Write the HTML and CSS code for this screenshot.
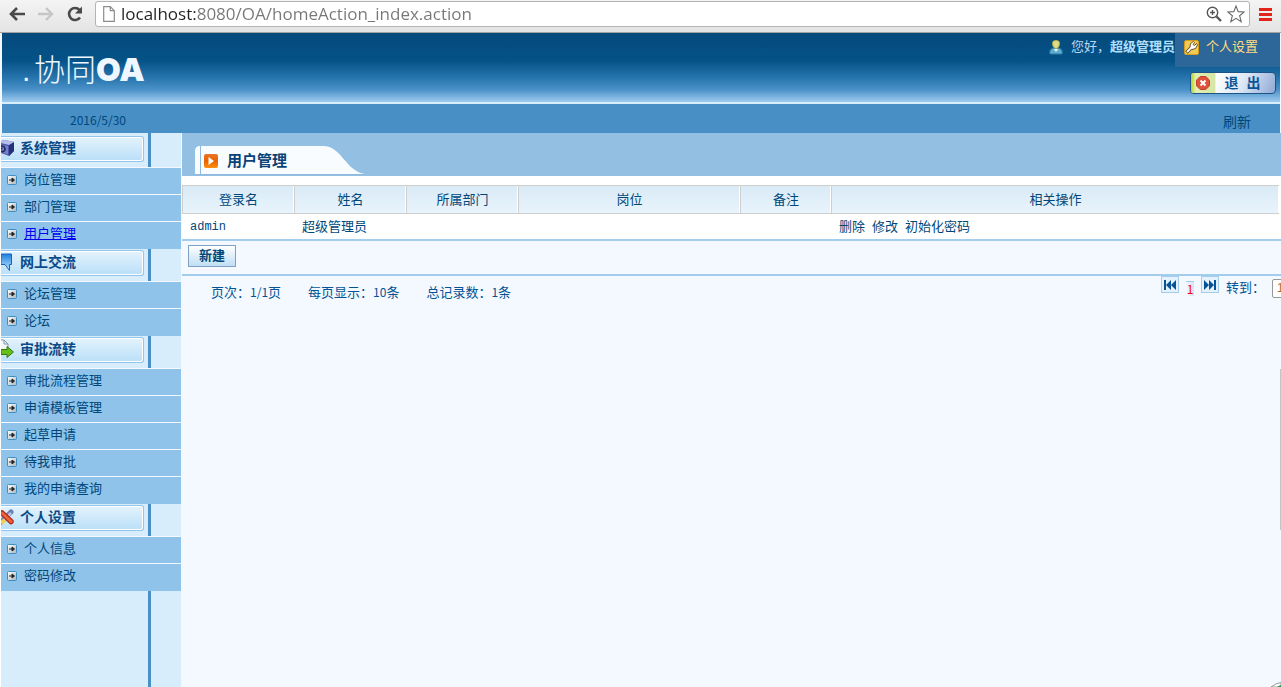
FILE: index.html
```html
<!DOCTYPE html>
<html lang="zh-CN">
<head>
  <meta charset="UTF-8" />
  <meta name="viewport" content="width=device-width, initial-scale=1" />
  <title>协同OA</title>
  <link rel="stylesheet" href="styles.css">
</head>
<body>
  <svg width="0" height="0" class="defs">
    <defs>
      <linearGradient id="steel" x1="0" y1="0" x2="1" y2="1">
        <stop offset="0" stop-color="#ffffff" />
        <stop offset="1" stop-color="#aab6bd" />
      </linearGradient>
      <linearGradient id="orange" x1="0" y1="0" x2="0" y2="1">
        <stop offset="0" stop-color="#e8752a" />
        <stop offset="0.5" stop-color="#e86100" />
        <stop offset="1" stop-color="#ff8f10" />
      </linearGradient>
      <linearGradient id="bubble" x1="0" y1="0" x2="0" y2="1">
        <stop offset="0" stop-color="#1a7fe0" />
        <stop offset="1" stop-color="#c4e8ff" />
      </linearGradient>
      <symbol id="arrow" viewBox="0 0 10 10">
        <rect x="0.5" y="0.5" width="9" height="9" rx="1" fill="url(#steel)" stroke="#3c8fc0" />
        <path d="M2 5h4M5 3L7.500 5L5 7z" fill="#222" stroke="#222" />
      </symbol>
    </defs>
  </svg>

  <div class="toolbar">
    <button type="button" class="tool-btn" aria-label="后退">
      <svg width="18" height="16" viewBox="0 0 18 16"><path d="M9 2L3 8l6 6M3 8h14" fill="none" stroke="#4a4a4a" stroke-width="2.6" /></svg>
    </button>
    <button type="button" class="tool-btn" aria-label="前进">
      <svg width="18" height="16" viewBox="0 0 18 16"><path d="M9 2l6 6l-6 6M15 8H1" fill="none" stroke="#c6c6c6" stroke-width="2.4" /></svg>
    </button>
    <button type="button" class="tool-btn" aria-label="重新加载">
      <svg width="18" height="16" viewBox="0 0 18 16"><path d="M14 11.5A6 6 0 1 1 13.5 4" fill="none" stroke="#4a4a4a" stroke-width="2.6" /><path d="M16 0.5v7H9z" fill="#4a4a4a" /></svg>
    </button>
    <div class="address">
      <svg width="12" height="16" viewBox="0 0 12 16"><path d="M0.7 0.7h6.6l4 4v10.6H0.7zM7.3 0.7v4h4" fill="#fff" stroke="#8c8c8c" stroke-width="1.2" /></svg>
      <input type="text" class="url" aria-label="地址" value="localhost:8080/OA/homeAction_index.action" />
      <button type="button" class="addr-btn" aria-label="缩放">
        <svg width="16" height="16" viewBox="0 0 16 16"><circle cx="6.5" cy="6.5" r="5.2" fill="none" stroke="#555" stroke-width="1.4" /><path d="M4 6.5h5M6.5 4v5" stroke="#555" stroke-width="1.4" /><path d="M10.5 10.5l4.5 4.5" stroke="#555" stroke-width="2.4" /></svg>
      </button>
      <button type="button" class="addr-btn" aria-label="收藏">
        <svg width="18" height="18" viewBox="0 0 18 18"><path d="M9 1l2.2 5.6l6.1 0.3l-4.7 3.8l1.6 6L9 13.4l-5.2 3.3l1.6-6L0.7 6.9l6.1-0.3z" fill="#fff" stroke="#6a6a6a" stroke-width="1.1" /></svg>
      </button>
    </div>
    <button type="button" class="menu-btn" aria-label="菜单">
      <svg width="13" height="13" viewBox="0 0 13 13"><path d="M0 1.5h13M0 6.5h13M0 11.5h13" stroke="#e3241b" stroke-width="3" /></svg>
    </button>
  </div>

  <div class="header">
    <div class="logo"><span class="dot">.</span><span class="cn">协同</span><span class="oa">OA</span></div>
    <div class="user-area">
      <div class="user-line">
        <span class="hello">
          <svg width="14" height="15" viewBox="0 0 14 15">
            <path d="M1 14c-1-5 2-6 6-6s7 1 6 6z" fill="#5cadcf" stroke="#2f7da8" />
            <path d="M4.5 9L7 12l2.5-3" fill="#d5eef8" />
            <path d="M3.5 3.5C3.5 1 5 0.5 7 0.5s3.5 0.5 3.5 3S9 8.5 7 8.5S3.5 6 3.5 3.5z" fill="#dfdc86" stroke="#a9a84a" />
          </svg>
          您好，<b>超级管理员</b>
        </span>
        <a href="#" class="setting">
          <svg width="15" height="15" viewBox="0 0 15 15">
            <rect x="0.5" y="0.5" width="14" height="14" rx="1.5" fill="#f3c956" stroke="#d39a1c" />
            <path d="M2.5 12.500L8 7" stroke="#5c4a22" stroke-width="3.6" />
            <path d="M9.500 1.500L6.500 3.500L6 7.500L8 9.500L11.500 8.500L13.500 5L12.500 3.500L10.500 5.500L9 4.500L10.500 2.500z" fill="#fff" stroke="#5c4a22" stroke-width="0.9" />
            <path d="M3 12L8.500 6.500" stroke="#fff" stroke-width="1.8" />
          </svg>
          个人设置
        </a>
      </div>
      <button type="button" class="logout">
        <span class="logout-icon">
          <svg width="14" height="14" viewBox="0 0 14 14"><path d="M4.2 0.5h5.6l3.7 3.7v5.6l-3.7 3.7H4.2L0.5 9.8V4.200z" fill="#e0513a" stroke="#c0402a" /><path d="M4.500 4.500l5 5M9.500 4.500l-5 5" stroke="#fff" stroke-width="2" /></svg>
        </span>
        <span class="logout-text">退&nbsp; 出</span>
      </button>
    </div>
  </div>

  <div class="subbar">
    <span class="date">2016/5/30</span>
    <a href="#">刷新</a>
  </div>

  <div class="page">
    <div class="sidebar">
      <div class="group">
        <button type="button" class="group-title">
          <svg width="14" height="20" viewBox="0 0 14 20"><path d="M0 3l4-1l9 2v9l-5 5l-8-3z" fill="#4a57a6" /><path d="M8 7l5-3v9l-5 5z" fill="#27307a" /><path d="M0 3l4-1l9 2l-5 3l-8-2z" fill="#b4bdec" /><path d="M0 6.500l7 1.500v8.500l-7-2z" fill="#7480c8" /><path d="M0 8c3 0 4 1 4 3s-1 3-4 2.500M0 10.500h1.500" fill="none" stroke="#1f2867" stroke-width="1.6" /></svg>
          系统管理
        </button>
      </div>
      <ul>
        <li><a href="#"><svg width="10" height="10"><use href="#arrow" /></svg>岗位管理</a></li>
        <li><a href="#"><svg width="10" height="10"><use href="#arrow" /></svg>部门管理</a></li>
        <li><a href="#" class="active"><svg width="10" height="10"><use href="#arrow" /></svg><span>用户管理</span></a></li>
      </ul>
      <div class="group">
        <button type="button" class="group-title">
          <svg width="14" height="20" viewBox="0 0 14 20"><path d="M0 2h10.500v10.500H8.500v6L4 12.500H0z" fill="url(#bubble)" stroke="#1c64b8" /></svg>
          网上交流
        </button>
      </div>
      <ul>
        <li><a href="#"><svg width="10" height="10"><use href="#arrow" /></svg>论坛管理</a></li>
        <li><a href="#"><svg width="10" height="10"><use href="#arrow" /></svg>论坛</a></li>
      </ul>
      <div class="group">
        <button type="button" class="group-title">
          <svg width="14" height="20" viewBox="0 0 14 20"><path d="M0 1h3l4 4v9H0M3 1v4h4" fill="#f4f7fa" stroke="#8b98a5" /><path d="M0 10.500h6V7.500l6.500 5.500L6 18.500V15.500H0z" fill="#67bd1c" stroke="#2e7d0b" /></svg>
          审批流转
        </button>
      </div>
      <ul>
        <li><a href="#"><svg width="10" height="10"><use href="#arrow" /></svg>审批流程管理</a></li>
        <li><a href="#"><svg width="10" height="10"><use href="#arrow" /></svg>申请模板管理</a></li>
        <li><a href="#"><svg width="10" height="10"><use href="#arrow" /></svg>起草申请</a></li>
        <li><a href="#"><svg width="10" height="10"><use href="#arrow" /></svg>待我审批</a></li>
        <li><a href="#"><svg width="10" height="10"><use href="#arrow" /></svg>我的申请查询</a></li>
      </ul>
      <div class="group">
        <button type="button" class="group-title">
          <svg width="14" height="20" viewBox="0 0 14 20"><path d="M0 15L10 5" stroke="#6c7fb4" stroke-width="5" stroke-linecap="round" /><path d="M1 15L10 6" stroke="#b9c6ea" stroke-width="2.5" /><path d="M1 6L10 14.500" stroke="#a83018" stroke-width="5.500" stroke-linecap="round" /><path d="M1 6L10 14.500" stroke="#f0603a" stroke-width="3" stroke-linecap="round" /><path d="M0 16l4-3" stroke="#f3d04e" stroke-width="4" /></svg>
          个人设置
        </button>
      </div>
      <ul>
        <li><a href="#"><svg width="10" height="10"><use href="#arrow" /></svg>个人信息</a></li>
        <li><a href="#"><svg width="10" height="10"><use href="#arrow" /></svg>密码修改</a></li>
      </ul>
    </div>

    <div class="main">
      <div class="title-bar">
        <div class="tab">
          <svg class="tab-bg" width="170" height="30" viewBox="0 0 170 30"><path d="M0 29V5Q0 0 5 0H128C147 0 150 25 170 28V29z" fill="#f9fcff" /><path d="M5.5 0v29M0 28.5h170" stroke="#8fbbe2" /></svg>
          <svg width="14" height="14" viewBox="0 0 14 14"><rect width="14" height="14" rx="2" fill="url(#orange)" /><path d="M4.5 3l5.500 4l-5.500 4z" fill="#fff" /></svg>
          <span>用户管理</span>
        </div>
      </div>

      <div class="list-wrap">
        <table class="list">
          <colgroup>
            <col class="c-name" /><col class="c-name" /><col class="c-name" /><col class="c-post" /><col class="c-note" /><col />
          </colgroup>
          <thead>
            <tr><th>登录名</th><th>姓名</th><th>所属部门</th><th>岗位</th><th>备注</th><th>相关操作</th></tr>
          </thead>
          <tbody>
            <tr>
              <td><span class="login-name">admin</span></td>
              <td>超级管理员</td>
              <td></td>
              <td></td>
              <td></td>
              <td><div class="actions"><a href="#">删除</a><a href="#">修改</a><a href="#">初始化密码</a></div></td>
            </tr>
          </tbody>
        </table>
      </div>

      <div class="create-row">
        <button type="button" class="create-btn">新建</button>
      </div>

      <div class="pager">
        <div class="page-info">
          <span>页次：<span class="num">1/1</span>页</span>
          <span>每页显示：<span class="num">10</span>条</span>
          <span>总记录数：<span class="num">1</span>条</span>
        </div>
        <div class="page-nav">
          <button type="button" class="nav-btn" aria-label="首页"><svg width="12" height="10" viewBox="0 0 12 10"><path d="M0 0h2v10H0zM7 0v10L2 5zM12 0v10L7 5z" fill="#045397" /></svg></button>
          <span class="current num">1</span>
          <button type="button" class="nav-btn" aria-label="尾页"><svg width="12" height="10" viewBox="0 0 12 10"><path d="M10 0h2v10h-2zM5 0v10l5-5zM0 0v10l5-5z" fill="#045397" /></svg></button>
          <label for="goto">转到：</label>
          <select id="goto"><option>1</option></select>
        </div>
      </div>
    </div>
  </div>

  <div class="scroll-thumb"></div>
  <svg class="float-ball" width="10" height="5" viewBox="0 0 10 5"><path d="M0 5Q5 1 10 0.5V5z" fill="#fff" stroke="#999" /><path d="M6 5Q8 3.500 10 3V5z" fill="#1c9a5b" /></svg>
</body>
</html>
```

FILE: styles.css
```css
* {
  box-sizing: border-box;
}

body {
  margin: 0;
  min-height: 100vh;
  display: flex;
  flex-direction: column;
  position: relative;
  overflow-x: hidden;
  font-family: "Liberation Sans", "Noto Sans CJK SC", sans-serif;
  font-size: 13px;
  line-height: 18px;
  color: #004779;
  background: #f3f9fe;
}

button {
  font-family: inherit;
  color: inherit;
  cursor: pointer;
}

a {
  color: inherit;
  text-decoration: none;
}

svg {
  display: block;
  flex: none;
}

.defs {
  position: absolute;
}

.num {
  font-family: "Noto Sans CJK SC", sans-serif;
  font-size: 12px;
}

.login-name {
  font-family: "Liberation Mono", monospace;
  font-size: 12px;
}

/* browser toolbar */
.toolbar {
  display: flex;
  align-items: center;
  height: 33px;
  padding: 0 9px 4px 8px;
  background: linear-gradient(#f4f4f4, #e4e4e4);
  border-bottom: 1px solid #a3a3a3;
}

.tool-btn,
.addr-btn,
.menu-btn {
  border: none;
  background: none;
  padding: 0;
}

.tool-btn {
  width: 29px;
}

.address {
  flex: 1;
  display: flex;
  align-items: center;
  height: 26px;
  padding: 0 4px 0 7px;
  background: #fff;
  border: 1px solid #b4b4b4;
  border-radius: 3px;
}

.url {
  flex: 1;
  min-width: 0;
  margin-left: 6px;
  padding: 0;
  border: none;
  outline: none;
  font-family: "Open Sans", sans-serif;
  font-size: 17px;
  line-height: 24px;
  color: transparent;
  background: linear-gradient(90deg, #222 75px, #777 75px);
  -webkit-background-clip: text;
  background-clip: text;
}

.addr-btn {
  margin-left: 5px;
}

.menu-btn {
  margin-left: 9px;
}

/* header */
.header {
  display: flex;
  justify-content: space-between;
  height: 69px;
  margin: 0 1px 0 2px;
  background: linear-gradient(#064a7c, #045287 40%, #2775ad 65%, #4a90c8 82%, #9ecbee);
}

.logo {
  display: flex;
  align-items: baseline;
  padding: 13px 0 0 20px;
  line-height: 44px;
  color: #eef7ff;
}

.logo .dot {
  width: 12px;
  font-size: 30px;
}

.logo .cn {
  font-family: "Noto Sans CJK SC", sans-serif;
  font-size: 31px;
  font-weight: 300;
}

.logo .oa {
  font-family: Inter, sans-serif;
  font-size: 32px;
  font-weight: 900;
}

.user-area {
  display: flex;
  flex-direction: column;
  align-items: flex-end;
  gap: 5px;
}

.user-line {
  display: flex;
  height: 34px;
}

.hello,
.setting {
  display: flex;
  height: 28px;
  align-items: center;
}

.hello {
  color: #b5d8f5;
}

.hello svg {
  margin-right: 8px;
}

.hello b {
  color: #b0e0ff;
}

.setting {
  gap: 7px;
  height: 34px;
  padding: 0 22px 6px 9px;
  background: #2d6699;
  color: #ffdd80;
}

.logout {
  display: flex;
  align-items: stretch;
  width: 86px;
  height: 22px;
  margin-right: 4px;
  padding: 0;
  border: 1px solid #1d5487;
  border-radius: 4px;
  overflow: hidden;
  background: linear-gradient(115deg, #fdfeff 30%, #dfe8f6 60%, #8fa9d6);
}

.logout-icon {
  display: flex;
  align-items: center;
  padding: 0 5px;
  background: linear-gradient(90deg, #b4d41c, #e4efb4 20%, #d5e6a4);
  border-right: 1px solid #eef4dc;
}

.logout-text {
  flex: 1;
  padding-right: 6px;
  font-size: 14px;
  font-weight: 700;
  line-height: 20px;
  color: #0b5596;
}

.subbar {
  display: flex;
  justify-content: space-between;
  height: 31px;
  margin: 0 1px 0 2px;
  padding: 9px 29px 0 68px;
  border-top: 2px solid #d8edfc;
  background: #488fc6;
}

.subbar .date {
  font-family: "Noto Sans CJK SC", sans-serif;
  font-size: 12px;
  line-height: 14px;
}

.subbar a {
  font-size: 14px;
}

/* layout */
.page {
  flex: 1;
  display: flex;
}

/* sidebar, with the blue rule that runs behind the lists */
.sidebar {
  flex: none;
  width: 181px;
  padding-top: 2px;
  border-left: 1px solid #fff;
  background: linear-gradient(90deg, #d7edfb 147px, #488fc6 147px, #488fc6 150px, #d7edfb 150px);
}

.group {
  height: 32px;
  padding-top: 1px;
}

.group-title {
  display: flex;
  align-items: center;
  gap: 5px;
  width: 143px;
  height: 26px;
  padding: 0 0 2px;
  border: 1px solid #93c4ea;
  border-left: none;
  border-radius: 0 3px 3px 0;
  box-shadow: inset -1px -1px #fff, inset 0 1px #fff;
  background: linear-gradient(#e4f3fc, #b9dff8);
  font-size: 14px;
  font-weight: 700;
  line-height: 18px;
  color: #0b4a86;
}

.sidebar ul {
  list-style: none;
  margin: 0;
  padding: 0;
  border-bottom: 1px solid #8fc3ea;
}

.sidebar li {
  height: 27px;
  border-top: 1px solid #f3f9fe;
  background: #8fc3ea;
}

.sidebar li a {
  display: flex;
  align-items: center;
  gap: 7px;
  height: 24px;
  padding-left: 6px;
}

.sidebar .active span {
  color: #0000f0;
  text-decoration: underline;
}

/* content */
.main {
  flex: 1;
  min-width: 0;
  overflow: hidden;
  margin-left: 1px;
}

.title-bar {
  height: 43px;
  padding: 13px 0 0 13px;
  background: #93bfe2;
}

.tab {
  position: relative;
  display: flex;
  align-items: center;
  gap: 9px;
  width: 170px;
  height: 30px;
  padding-left: 9px;
  font-size: 15px;
  font-weight: 700;
  color: #0b4276;
}

.tab-bg {
  position: absolute;
  top: 0;
  left: 0;
}

.tab svg,
.tab span {
  z-index: 1;
}

.tab .tab-bg {
  z-index: 0;
}

.list-wrap {
  padding: 9px 2px 0 0;
  border-bottom: 2px solid #a3cdec;
  background: #fff;
}

.list {
  width: 100%;
  table-layout: fixed;
  border-collapse: separate;
  border-spacing: 0;
}

.c-name {
  width: 112px;
}

.c-post {
  width: 222px;
}

.c-note {
  width: 91px;
}

.list th {
  height: 29px;
  padding: 0;
  border: 1px solid #cfcfcf;
  border-width: 1px 0 1px 1px;
  box-shadow: inset -1px 0 #fff;
  background: linear-gradient(#d9eaf6, #e9f4fc);
  font-weight: 400;
}

.list td {
  height: 25px;
  padding: 0 8px;
}

.actions {
  display: flex;
  gap: 7px;
}

.create-row {
  padding: 4px 6px 7px;
  border-bottom: 2px solid #a3cdec;
}

.create-btn {
  display: block;
  width: 48px;
  height: 22px;
  padding: 0;
  border: 1px solid #7f9fc4;
  background: linear-gradient(#fff, #c0def5);
  font-size: 13px;
  font-weight: 700;
  line-height: 18px;
}

.pager {
  display: flex;
  justify-content: space-between;
  color: #045397;
}

.page-info {
  display: flex;
  gap: 27px;
  padding: 7px 0 0 29px;
}

.page-nav {
  display: flex;
  align-items: center;
  height: 24px;
}

.nav-btn {
  display: flex;
  align-items: center;
  justify-content: center;
  align-self: flex-start;
  width: 18px;
  height: 17px;
  padding: 0;
  border: 1px solid #a3cdec;
  background: #e6f2fb;
}

.current {
  margin: 0 7px;
  width: 8px;
  line-height: 14px;
  text-align: center;
  color: #f00;
  background: linear-gradient(90deg, #f3f9fe, #cfe5f5);
  border-top: 1px solid #a3cdec;
}

.page-nav label {
  margin-left: 7px;
}

/* the drop-down runs past the right edge of the frame */
.page-nav select {
  width: 60px;
  height: 19px;
  margin: 0 -51px 0 7px;
  padding: 0;
  border: 1px solid #999;
  border-radius: 2px;
  background: #fff;
  font-size: 12px;
  color: #b46a1c;
}

.scroll-thumb {
  position: absolute;
  top: 369px;
  right: 0;
  width: 1px;
  height: 161px;
  background: #c4c4c4;
}

.float-ball {
  position: absolute;
  right: 0;
  bottom: 0;
}
```
